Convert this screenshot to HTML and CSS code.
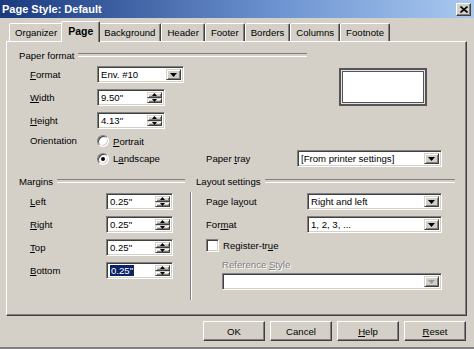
FILE: index.html
```html
<!DOCTYPE html>
<html>
<head>
<meta charset="utf-8">
<link rel="stylesheet" href="styles.css">
</head>
<body>
<div class="dialog">
  <div class="titlebar">
    <span class="title">Page Style: Default</span>
    <span class="close"><svg width="8" height="7" viewBox="0 0 8 7"><path d="M0.5 0.5 L7.5 6.5 M7.5 0.5 L0.5 6.5" stroke="#000" stroke-width="1.6"/></svg></span>
  </div>
  <div class="tabs">
    <span class="tab">Organizer</span>
    <span class="tab active">Page</span>
    <span class="tab">Background</span>
    <span class="tab">Header</span>
    <span class="tab">Footer</span>
    <span class="tab">Borders</span>
    <span class="tab">Columns</span>
    <span class="tab">Footnote</span>
  </div>
  <div class="panel">
    <section class="paper">
      <div class="legend legend-paper"><span>Paper format</span></div>
      <div class="pf-grid">
        <span class="lbl c1"><u>F</u>ormat</span>
        <span class="select w-format c2"><span class="val">Env. #10</span><span class="drop"><svg width="7" height="4" viewBox="0 0 7 4"><path d="M0 0 H7 L3.5 4 Z" fill="#000"/></svg></span></span>
        <div class="preview"></div>

        <span class="lbl c1"><u>W</u>idth</span>
        <span class="spin w-pf c2"><span class="val">9.50"</span><span class="arrows"><span class="up"><svg width="5" height="3" viewBox="0 0 5 3"><path d="M0 3 H5 L2.5 0 Z" fill="#000"/></svg></span><span class="dn"><svg width="5" height="3" viewBox="0 0 5 3"><path d="M0 0 H5 L2.5 3 Z" fill="#000"/></svg></span></span></span>

        <span class="lbl c1"><u>H</u>eight</span>
        <span class="spin w-pf c2"><span class="val">4.13"</span><span class="arrows"><span class="up"><svg width="5" height="3" viewBox="0 0 5 3"><path d="M0 3 H5 L2.5 0 Z" fill="#000"/></svg></span><span class="dn"><svg width="5" height="3" viewBox="0 0 5 3"><path d="M0 0 H5 L2.5 3 Z" fill="#000"/></svg></span></span></span>

        <span class="lbl lbl-small c1">Orientation</span>
        <span class="radio-row c2"><span class="radio"></span><span><u>P</u>ortrait</span></span>

        <span class="radio-row landscape"><span class="radio checked"></span><span>L<u>a</u>ndscape</span></span>
        <span class="lbl tray">Paper <u>t</u>ray</span>
        <span class="select w-tray"><span class="val">[From printer settings]</span><span class="drop"><svg width="7" height="4" viewBox="0 0 7 4"><path d="M0 0 H7 L3.5 4 Z" fill="#000"/></svg></span></span>
      </div>
    </section>

    <div class="lower">
      <section class="margins">
        <div class="legend legend-margins"><span>Margins</span></div>
        <div class="m-grid">
          <span class="lbl"><u>L</u>eft</span>
          <span class="spin w-m"><span class="val">0.25"</span><span class="arrows"><span class="up"><svg width="5" height="3" viewBox="0 0 5 3"><path d="M0 3 H5 L2.5 0 Z" fill="#000"/></svg></span><span class="dn"><svg width="5" height="3" viewBox="0 0 5 3"><path d="M0 0 H5 L2.5 3 Z" fill="#000"/></svg></span></span></span>
          <span class="lbl"><u>R</u>ight</span>
          <span class="spin w-m"><span class="val">0.25"</span><span class="arrows"><span class="up"><svg width="5" height="3" viewBox="0 0 5 3"><path d="M0 3 H5 L2.5 0 Z" fill="#000"/></svg></span><span class="dn"><svg width="5" height="3" viewBox="0 0 5 3"><path d="M0 0 H5 L2.5 3 Z" fill="#000"/></svg></span></span></span>
          <span class="lbl"><u>T</u>op</span>
          <span class="spin w-m"><span class="val">0.25"</span><span class="arrows"><span class="up"><svg width="5" height="3" viewBox="0 0 5 3"><path d="M0 3 H5 L2.5 0 Z" fill="#000"/></svg></span><span class="dn"><svg width="5" height="3" viewBox="0 0 5 3"><path d="M0 0 H5 L2.5 3 Z" fill="#000"/></svg></span></span></span>
          <span class="lbl"><u>B</u>ottom</span>
          <span class="spin w-m"><span class="val"><span class="sel">0.25"</span></span><span class="arrows"><span class="up"><svg width="5" height="3" viewBox="0 0 5 3"><path d="M0 3 H5 L2.5 0 Z" fill="#000"/></svg></span><span class="dn"><svg width="5" height="3" viewBox="0 0 5 3"><path d="M0 0 H5 L2.5 3 Z" fill="#000"/></svg></span></span></span>
        </div>
      </section>

      <section class="layout">
        <div class="legend legend-layout"><span>Layout settings</span></div>
        <div class="layout-body">
          <div class="l-grid">
            <span class="lbl">Page la<u>y</u>out</span>
            <span class="select w-l"><span class="val">Right and left</span><span class="drop"><svg width="7" height="4" viewBox="0 0 7 4"><path d="M0 0 H7 L3.5 4 Z" fill="#000"/></svg></span></span>
            <span class="lbl">For<u>m</u>at</span>
            <span class="select w-l"><span class="val">1, 2, 3, ...</span><span class="drop"><svg width="7" height="4" viewBox="0 0 7 4"><path d="M0 0 H7 L3.5 4 Z" fill="#000"/></svg></span></span>
          </div>
          <div class="check-row"><span class="checkbox"></span><span>Register-tr<u>u</u>e</span></div>
          <div class="ref">
            <div class="ref-lbl">Reference <u>S</u>tyle</div>
            <span class="select w-ref disabled"><span class="val"></span><span class="drop"><svg width="7" height="4" viewBox="0 0 7 4"><path d="M0 0 H7 L3.5 4 Z" fill="#9a9a9a"/></svg></span></span>
          </div>
        </div>
      </section>
    </div>
  </div>
  <div class="buttons">
    <span class="btn">OK</span>
    <span class="btn">Cancel</span>
    <span class="btn"><u>H</u>elp</span>
    <span class="btn"><u>R</u>eset</span>
  </div>
</div>
</body>
</html>
```
FILE: styles.css
```css
* { box-sizing: border-box; }
html, body { margin: 0; padding: 0; }
body {
  width: 474px;
  height: 349px;
  overflow: hidden;
  background: #d4d0c8;
  font-family: "Liberation Sans", Arial, sans-serif;
  font-size: 9.6px;
  color: #000;
}
u { text-decoration: underline; text-underline-offset: 1px; }

.dialog {
  height: 349px;
  border-bottom: 2px solid #808080;
  display: flex;
  flex-direction: column;
}

.titlebar {
  height: 18px;
  flex: none;
  background: linear-gradient(to right, #1a3a80, #6f95d2 60%, #a9c9ef);
  display: flex;
  align-items: center;
  justify-content: space-between;
  padding: 0 3px 0 2px;
}
.title { color: #fff; font-weight: bold; font-size: 11px; }
.close {
  width: 15px;
  height: 13px;
  background: #d4d0c8;
  border: 1px solid;
  border-color: #fff #404040 #404040 #fff;
  box-shadow: inset -1px -1px 0 #808080;
  display: flex;
  align-items: center;
  justify-content: center;
}

.tabs {
  display: flex;
  align-items: flex-end;
  height: 20px;
  flex: none;
  margin-top: 3px;
  padding-left: 9px;
  position: relative;
  z-index: 1;
}
.tab {
  height: 18px;
  padding: 0 5px;
  border: 1px solid;
  border-bottom: none;
  border-color: #fff #404040 transparent #fff;
  box-shadow: inset -1px 0 0 #808080;
  border-radius: 2px 2px 0 0;
  display: flex;
  align-items: center;
  background: #d4d0c8;
}
.tab.active {
  height: 21px;
  margin: 0 -2px -1px;
  padding: 0 6px 2px;
  font-weight: bold;
  font-size: 10.5px;
  position: relative;
  z-index: 2;
}

.panel {
  flex: none;
  margin: 0 7px 0 6px;
  height: 275px;
  border: 1px solid;
  border-color: #fff #404040 #404040 #fff;
  box-shadow: inset -1px -1px 0 #808080;
  padding: 7px 0 0 12px;
}

.legend {
  display: flex;
  align-items: center;
  height: 12px;
}
.legend::after {
  content: "";
  flex: 1;
  height: 2px;
  border-top: 1px solid #808080;
  border-bottom: 1px solid #fff;
  margin-left: 4px;
}
.legend-paper { width: 288px; }
.legend-margins { width: 166px; }
.legend-layout { width: 259px; margin-left: 6px; }

.lbl { display: block; height: 17px; line-height: 17px; white-space: nowrap; }
.lbl-small { height: 12px; line-height: 12px; }

.pf-grid {
  display: grid;
  grid-template-columns: 67px 109px 91px 145px;
  grid-template-rows: 23px 23px 23px 15px 17px;
  margin: 5px 0 0 11px;
  align-items: start;
}
.pf-grid .c1 { grid-column: 1; }
.pf-grid .c2 { grid-column: 2; }
.pf-grid .preview {
  grid-column: 4;
  grid-row: 1 / 4;
  margin: 2px 0 0 42px;
  width: 88px;
  height: 38px;
  background: #fff;
  border: 2px solid #555;
  box-shadow: inset 0 0 0 1px #e4e4e4, inset 0 0 0 2px #555;
}
.pf-grid .landscape { grid-column: 2; grid-row: 5; height: 17px; }
.pf-grid .tray { grid-column: 3; grid-row: 5; }
.pf-grid .w-tray { grid-column: 4; grid-row: 5; }

.select, .spin, .checkbox, .radio {
  border: 1px solid;
  border-color: #808080 #fff #fff #808080;
  box-shadow: inset 1px 1px 0 #404040, inset -1px -1px 0 #d4d0c8;
  background: #fff;
}
.select, .spin {
  display: flex;
  height: 17px;
  padding: 2px;
}
.select .val, .spin .val {
  flex: 1;
  display: flex;
  align-items: center;
  padding-left: 1px;
  white-space: nowrap;
  overflow: hidden;
}
.drop {
  width: 15px;
  flex: none;
  background: #d4d0c8;
  border: 1px solid;
  border-color: #d4d0c8 #404040 #404040 #d4d0c8;
  box-shadow: inset 1px 1px 0 #fff, inset -1px -1px 0 #808080;
  display: flex;
  align-items: center;
  justify-content: center;
}
.arrows {
  width: 15px;
  flex: none;
  display: flex;
  flex-direction: column;
}
.arrows .up, .arrows .dn {
  flex: 1;
  background: #d4d0c8;
  border: 1px solid;
  border-color: #d4d0c8 #404040 #404040 #d4d0c8;
  box-shadow: inset 1px 1px 0 #fff, inset -1px -1px 0 #808080;
  display: flex;
  align-items: center;
  justify-content: center;
}
.w-format { width: 87px; }
.w-pf { width: 68px; }
.w-tray { width: 145px; }
.w-m { width: 67px; }
.w-l { width: 135px; }
.w-ref { width: 220px; }

.sel { background: #0a246a; color: #fff; padding: 0 1px; }

.radio-row { display: flex; align-items: center; gap: 4px; height: 12px; }
.pf-grid .landscape.radio-row { height: 17px; }
.radio {
  width: 12px;
  height: 12px;
  border-radius: 50%;
  flex: none;
  position: relative;
}
.radio.checked::after {
  content: "";
  position: absolute;
  left: 3px;
  top: 3px;
  width: 4px;
  height: 4px;
  border-radius: 50%;
  background: #000;
}

.lower { display: flex; margin-top: 8px; }
.margins { width: 171px; }
.m-grid {
  display: grid;
  grid-template-columns: 76px 67px;
  grid-auto-rows: 23px;
  margin: 6px 0 0 11px;
  align-items: start;
}

.layout { width: 265px; }
.layout-body {
  margin-top: 5px;
  border-left: 1px solid #808080;
  box-shadow: inset 1px 0 0 #fff;
  padding: 1px 0 10px 15px;
}
.l-grid {
  display: grid;
  grid-template-columns: 101px 135px;
  grid-auto-rows: 23px;
  align-items: start;
}
.check-row { display: flex; align-items: center; gap: 4px; height: 13px; margin-bottom: 7px; }
.checkbox { width: 13px; height: 13px; flex: none; }
.ref { padding-left: 16px; }
.ref-lbl { height: 12px; line-height: 12px; margin-bottom: 2px; color: #808080; text-shadow: 1px 1px 0 #fff; white-space: nowrap; }

.buttons {
  display: flex;
  justify-content: flex-end;
  gap: 5px;
  margin-top: 5px;
  padding-right: 8px;
}
.btn {
  width: 62px;
  height: 20px;
  display: flex;
  align-items: center;
  justify-content: center;
  border: 1px solid;
  border-color: #fff #404040 #404040 #fff;
  box-shadow: inset -1px -1px 0 #808080;
}
```
